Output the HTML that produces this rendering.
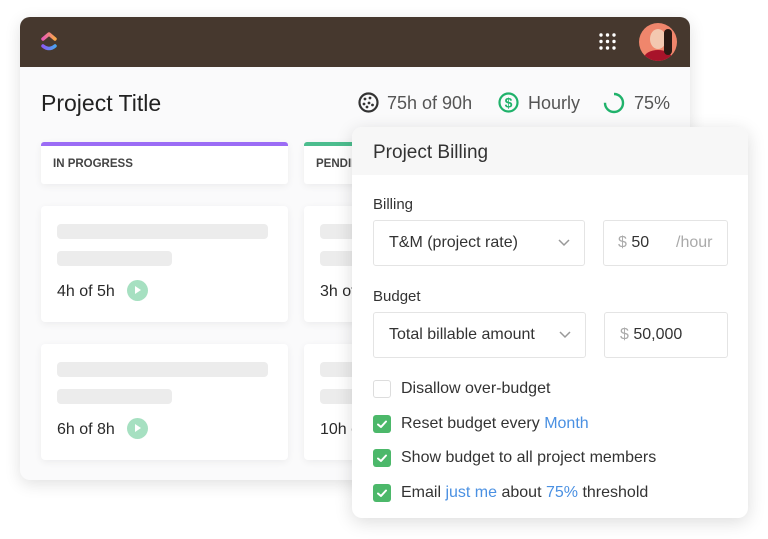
<!DOCTYPE html>
<html><head><style>
*{margin:0;padding:0;box-sizing:border-box}
body{width:768px;height:539px;background:#fff;font-family:"Liberation Sans",sans-serif;position:relative;overflow:hidden;color:#2a2a2a}
.abs{position:absolute}
.main{left:20px;top:17px;width:670px;height:463px;background:#fafafb;border-radius:10px;box-shadow:0 4px 16px rgba(0,0,0,.12);overflow:hidden}
.hdr{left:0;top:0;width:670px;height:50px;background:#46382e}
.box{background:#fff;border-radius:4px;box-shadow:0 2px 8px rgba(0,0,0,.06)}
.bar{background:#ececec;border-radius:4px;height:15px}
.pop{left:352px;top:127px;width:396px;height:391px;background:#fff;border-radius:10px;box-shadow:0 4px 18px rgba(0,0,0,.14);overflow:hidden}
.field{border:1px solid #e4e4e4;border-radius:3px;background:#fff;font-size:16px;color:#333}
.cb{width:18px;height:18px;border-radius:3px;background:#4cb86a}
.cb svg{display:block}
.row{font-size:16px;color:#333}
.blue{color:#4a90e2}
</style></head><body>
<div class="abs main">
 <div class="abs hdr">
  <svg class="abs" style="left:19px;top:13px" width="20" height="24" viewBox="0 0 20 24"><defs><linearGradient id="g1" x1="0" x2="1"><stop offset="0" stop-color="#e95ab5"/><stop offset="1" stop-color="#f7a84a"/></linearGradient><linearGradient id="g2" x1="0" x2="1"><stop offset="0" stop-color="#8a5cf5"/><stop offset="1" stop-color="#4aa3f0"/></linearGradient></defs><path d="M4 9 L10 4 L16 9" fill="none" stroke="url(#g1)" stroke-width="3.5" stroke-linecap="round" stroke-linejoin="round"/><path d="M4 16 Q10 21 16 16" fill="none" stroke="url(#g2)" stroke-width="3.5" stroke-linecap="round"/></svg>
  <svg class="abs" style="left:579px;top:16px" width="17" height="17"><g fill="#fff"><circle cx="2" cy="2" r="1.7"/><circle cx="8.5" cy="2" r="1.7"/><circle cx="15" cy="2" r="1.7"/><circle cx="2" cy="8.5" r="1.7"/><circle cx="8.5" cy="8.5" r="1.7"/><circle cx="15" cy="8.5" r="1.7"/><circle cx="2" cy="15" r="1.7"/><circle cx="8.5" cy="15" r="1.7"/><circle cx="15" cy="15" r="1.7"/></g></svg>
  <div class="abs" style="left:619px;top:6px;width:38px;height:38px;border-radius:50%;background:#f0866c;overflow:hidden"><div class="abs" style="left:11px;top:6px;width:16px;height:20px;border-radius:50%;background:#f3c8b0"></div><div class="abs" style="left:5px;top:27px;width:28px;height:16px;border-radius:50%;background:#a8132a"></div><div class="abs" style="left:25px;top:6px;width:8px;height:26px;background:#2b1a14;border-radius:4px"></div></div>
 </div>
 <div class="abs" style="left:21px;top:73px;font-size:23px;color:#222">Project Title</div>
 <svg class="abs" style="left:338px;top:75px" width="21" height="21"><circle cx="10.5" cy="10.5" r="9" fill="none" stroke="#333" stroke-width="2.2"/><g fill="#333"><circle cx="7" cy="7" r="1.4"/><circle cx="12" cy="6" r="1.4"/><circle cx="6" cy="12" r="1.4"/><circle cx="11" cy="11" r="1.4"/><circle cx="14.5" cy="13" r="1.4"/><circle cx="9" cy="15" r="1.4"/></g></svg>
 <div class="abs" style="left:367px;top:76px;font-size:18px;color:#555">75h of 90h</div>
 <svg class="abs" style="left:478px;top:75px" width="21" height="21"><circle cx="10.5" cy="10.5" r="9" fill="none" stroke="#20b26b" stroke-width="2.2"/><text x="10.5" y="15.5" text-anchor="middle" font-size="14" font-weight="bold" fill="#20b26b" font-family="Liberation Sans">$</text></svg>
 <div class="abs" style="left:508px;top:76px;font-size:18px;color:#555">Hourly</div>
 <svg class="abs" style="left:583px;top:75px" width="22" height="22"><circle cx="11" cy="11" r="9" fill="none" stroke="#20b26b" stroke-width="2.4" stroke-dasharray="42.4 56.5" transform="rotate(-90 11 11)"/></svg>
 <div class="abs" style="left:614px;top:76px;font-size:18px;color:#555">75%</div>

 <div class="abs box" style="left:21px;top:125px;width:247px;height:42px;border-top:4px solid #9b6cf5;border-radius:3px"></div>
 <div class="abs" style="left:33px;top:141px;font-size:11.5px;font-weight:bold;color:#444">IN PROGRESS</div>
 <div class="abs box" style="left:284px;top:125px;width:100px;height:42px;border-top:4px solid #4cbd8e;border-radius:3px"></div>
 <div class="abs" style="left:296px;top:141px;font-size:11.5px;font-weight:bold;color:#444">PENDING</div>

 <div class="abs box" style="left:21px;top:189px;width:247px;height:116px"></div>
 <div class="abs bar" style="left:37px;top:207px;width:211px"></div>
 <div class="abs bar" style="left:37px;top:234px;width:115px"></div>
 <div class="abs" style="left:37px;top:266px;font-size:16px">4h of 5h</div>
 <div class="abs" style="left:107px;top:263px;width:21px;height:21px;border-radius:50%;background:#a6e0c1"><div class="abs" style="left:8px;top:6px;border-left:6px solid #fff;border-top:4.5px solid transparent;border-bottom:4.5px solid transparent"></div></div>
 <div class="abs box" style="left:21px;top:327px;width:247px;height:116px"></div>
 <div class="abs bar" style="left:37px;top:345px;width:211px"></div>
 <div class="abs bar" style="left:37px;top:372px;width:115px"></div>
 <div class="abs" style="left:37px;top:404px;font-size:16px">6h of 8h</div>
 <div class="abs" style="left:107px;top:401px;width:21px;height:21px;border-radius:50%;background:#a6e0c1"><div class="abs" style="left:8px;top:6px;border-left:6px solid #fff;border-top:4.5px solid transparent;border-bottom:4.5px solid transparent"></div></div>

 <div class="abs box" style="left:284px;top:189px;width:100px;height:116px"></div>
 <div class="abs bar" style="left:300px;top:207px;width:60px"></div>
 <div class="abs bar" style="left:300px;top:234px;width:60px"></div>
 <div class="abs" style="left:300px;top:266px;font-size:16px">3h of 4h</div>
 <div class="abs box" style="left:284px;top:327px;width:100px;height:116px"></div>
 <div class="abs bar" style="left:300px;top:345px;width:60px"></div>
 <div class="abs bar" style="left:300px;top:372px;width:60px"></div>
 <div class="abs" style="left:300px;top:404px;font-size:16px">10h of</div>
</div>

<div class="abs pop">
 <div class="abs" style="left:0;top:0;width:396px;height:48px;background:#f7f7f7"></div>
 <div class="abs" style="left:21px;top:15px;font-size:19px;color:#333">Project Billing</div>
 <div class="abs" style="left:21px;top:69px;font-size:15px;color:#333">Billing</div>
 <div class="abs field" style="left:21px;top:93px;width:212px;height:46px"><span class="abs" style="left:15px;top:13px">T&amp;M (project rate)</span><svg class="abs" style="left:184px;top:18px" width="12" height="8"><path d="M1 1 L6 6 L11 1" fill="none" stroke="#999" stroke-width="1.5"/></svg></div>
 <div class="abs field" style="left:251px;top:93px;width:125px;height:46px"><span class="abs" style="left:14px;top:13px"><span style="color:#aaa">$</span> 50</span><span class="abs" style="left:72px;top:13px;color:#aaa">/hour</span></div>
 <div class="abs" style="left:21px;top:161px;font-size:15px;color:#333">Budget</div>
 <div class="abs field" style="left:21px;top:185px;width:213px;height:46px"><span class="abs" style="left:15px;top:13px">Total billable amount</span><svg class="abs" style="left:185px;top:18px" width="12" height="8"><path d="M1 1 L6 6 L11 1" fill="none" stroke="#999" stroke-width="1.5"/></svg></div>
 <div class="abs field" style="left:252px;top:185px;width:124px;height:46px"><span class="abs" style="left:15px;top:13px"><span style="color:#aaa">$</span> 50,000</span></div>

 <div class="abs" style="left:21px;top:253px;width:18px;height:18px;border:1px solid #ddd;border-radius:3px"></div>
 <div class="abs row" style="left:49px;top:253px">Disallow over-budget</div>
 <div class="abs cb" style="left:21px;top:288px"><svg width="18" height="18"><path d="M5 9.5 L8 12 L13 6.5" fill="none" stroke="#fff" stroke-width="2" stroke-linecap="round" stroke-linejoin="round"/></svg></div>
 <div class="abs row" style="left:49px;top:288px">Reset budget every <span class="blue">Month</span></div>
 <div class="abs cb" style="left:21px;top:322px"><svg width="18" height="18"><path d="M5 9.5 L8 12 L13 6.5" fill="none" stroke="#fff" stroke-width="2" stroke-linecap="round" stroke-linejoin="round"/></svg></div>
 <div class="abs row" style="left:49px;top:322px">Show budget to all project members</div>
 <div class="abs cb" style="left:21px;top:357px"><svg width="18" height="18"><path d="M5 9.5 L8 12 L13 6.5" fill="none" stroke="#fff" stroke-width="2" stroke-linecap="round" stroke-linejoin="round"/></svg></div>
 <div class="abs row" style="left:49px;top:357px">Email <span class="blue">just me</span> about <span class="blue">75%</span> threshold</div>
</div>
</body></html>
